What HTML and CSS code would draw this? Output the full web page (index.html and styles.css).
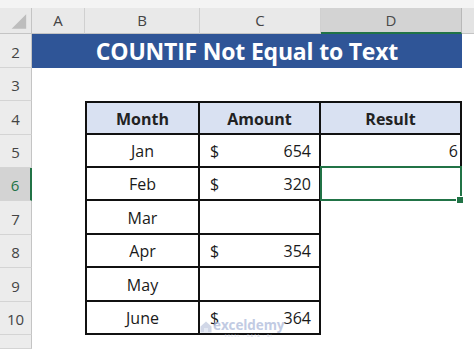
FILE: index.html
```html
<!DOCTYPE html>
<html>
<head>
<meta charset="utf-8">
<link rel="stylesheet" href="styles.css">
</head>
<body>
<div class="sheet">
  <div class="topstrip"></div>
  <div class="grid">
    <div class="ch corner"><svg width="32" height="26" viewBox="0 0 32 26"><polygon points="27,6 27,21 12,21" fill="#bdbdbd"/></svg></div>
    <div class="ch">A</div>
    <div class="ch">B</div>
    <div class="ch">C</div>
    <div class="ch sel">D</div>
    <div class="ch last"></div>

    <div class="rh">2</div>
    <div class="title">COUNTIF Not Equal to Text</div>
    <div class="c"></div>

    <div class="rh">3</div>
    <div class="c"></div><div class="c"></div><div class="c"></div><div class="c"></div><div class="c"></div>

    <div class="rh">4</div>
    <div class="c"></div>
    <div class="c tb tl tt th">Month</div>
    <div class="c tb tt th">Amount</div>
    <div class="c tb tt th">Result</div>
    <div class="c"></div>

    <div class="rh">5</div>
    <div class="c"></div>
    <div class="c tb tl">Jan</div>
    <div class="c tb amt"><span>$</span><span>654</span></div>
    <div class="c tb num">6</div>
    <div class="c"></div>

    <div class="rh rsel">6</div>
    <div class="c"></div>
    <div class="c tb tl">Feb</div>
    <div class="c tb amt"><span>$</span><span>320</span></div>
    <div class="c tb active"></div>
    <div class="c"></div>

    <div class="rh">7</div>
    <div class="c"></div>
    <div class="c tb tl">Mar</div>
    <div class="c tb"></div>
    <div class="c"></div>
    <div class="c"></div>

    <div class="rh">8</div>
    <div class="c"></div>
    <div class="c tb tl">Apr</div>
    <div class="c tb amt"><span>$</span><span>354</span></div>
    <div class="c"></div>
    <div class="c"></div>

    <div class="rh">9</div>
    <div class="c"></div>
    <div class="c tb tl">May</div>
    <div class="c tb"></div>
    <div class="c"></div>
    <div class="c"></div>

    <div class="rh">10</div>
    <div class="c"></div>
    <div class="c tb tl">June</div>
    <div class="c tb amt"><span>$</span><span>364</span></div>
    <div class="c"></div>
    <div class="c"></div>

    <div class="rh"></div>
    <div class="c"></div><div class="c"></div><div class="c"></div><div class="c"></div><div class="c"></div>
  </div>
  <div class="watermark">
    <svg class="wm-icon" width="12" height="12" viewBox="0 0 12 12"><path d="M0.5 5.5 L6 0.5 L11.5 5.5 L11.5 11.5 L0.5 11.5 Z" fill="#c6cee2"/><rect x="4" y="7" width="4" height="4.5" fill="#dde3f0"/></svg>
    <div class="wm-text">
      <span class="wm-name">exceldemy</span>
      <span class="wm-sub">EXCEL · DATA · BI</span>
    </div>
  </div>
</div>
</body>
</html>
```
FILE: styles.css
```css
html, body {
  margin: 0;
  padding: 0;
  background: #ffffff;
}
.sheet {
  position: relative;
  width: 474px;
  height: 349px;
  overflow: hidden;
  font-family: "Open Sans", "Liberation Sans", sans-serif;
  color: #1a1a1a;
}
.topstrip {
  height: 8px;
  background: #f4f4f4;
}
.grid {
  display: grid;
  grid-template-columns: 32px 53px 115px 121px 141px 12px;
  grid-template-rows: 26px 34px 33px 34px 33px 33px 34px 33px 34px 33px 14px;
}
.ch {
  background: #e9e9e9;
  border-right: 1px solid #d0d0d0;
  border-bottom: 1px solid #c4c4c4;
  box-sizing: border-box;
  display: flex;
  align-items: center;
  justify-content: center;
  font-size: 15px;
  color: #444;
  padding-bottom: 1px;
}
.ch.corner {
  padding: 0;
  border-right: 1px solid #c4c4c4;
}
.ch.sel {
  background: #d3d3d3;
  border-bottom: 2px solid #217346;
  border-right: 1px solid #b8b8b8;
  color: #4a4a4a;
}
.ch.last {
  background: #e3e3e3;
  border-right: none;
}
.rh {
  background: #ececec;
  border-right: 1px solid #c4c4c4;
  border-bottom: 1px solid #d4d4d4;
  box-sizing: border-box;
  display: flex;
  align-items: center;
  justify-content: center;
  font-size: 15px;
  color: #444;
  padding-top: 2px;
}
.rh.rsel {
  background: #d3d3d3;
  border-right: 2px solid #217346;
  color: #217346;
}
.title {
  grid-column: span 4;
  background: #2f5597;
  color: #ffffff;
  font-weight: 700;
  font-size: 23px;
  display: flex;
  align-items: center;
  justify-content: center;
  letter-spacing: -0.2px;
}
.c {
  box-sizing: border-box;
  display: flex;
  align-items: center;
  justify-content: center;
  font-size: 16px;
  padding-top: 1px;
}
.tb {
  border-right: 2px solid #111;
  border-bottom: 2px solid #111;
}
.tl {
  border-left: 2px solid #111;
}
.tt {
  border-top: 2px solid #111;
}
.th {
  background: #d9e1f2;
  font-weight: 700;
  color: #222;
}
.amt {
  justify-content: space-between;
  padding: 1px 8px 0 10px;
}
.num {
  justify-content: flex-end;
  padding-right: 2px;
}
.active {
  position: relative;
}
.active::after {
  content: "";
  position: absolute;
  left: -1px;
  top: -2px;
  right: -2px;
  bottom: -2px;
  border: 2px solid #217346;
}
.active::before {
  content: "";
  position: absolute;
  right: -4px;
  bottom: -5px;
  width: 6px;
  height: 6px;
  background: #217346;
  border: 1px solid #fff;
  z-index: 2;
}
.watermark {
  position: absolute;
  left: 200px;
  top: 319px;
  display: flex;
  align-items: flex-start;
  gap: 1px;
  opacity: 0.8;
}
.wm-icon {
  margin-top: 2px;
}
.wm-text {
  display: flex;
  flex-direction: column;
  align-items: center;
  line-height: 1;
}
.wm-name {
  font-family: "Open Sans", sans-serif;
  font-weight: 700;
  font-size: 13.5px;
  color: #b3bfdd;
  letter-spacing: -0.1px;
}
.wm-sub {
  font-size: 3.5px;
  color: #c8cfdf;
  letter-spacing: 1.2px;
  margin-top: 1px;
}
```
